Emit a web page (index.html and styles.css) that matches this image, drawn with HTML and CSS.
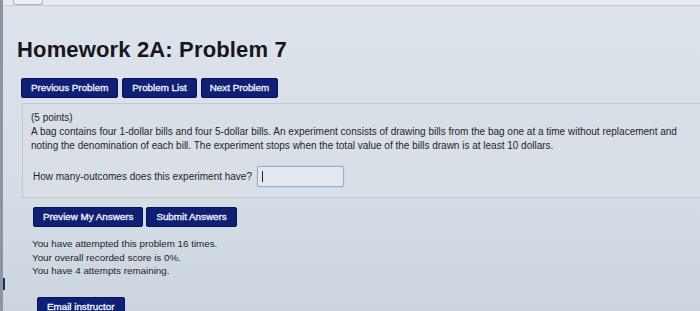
FILE: index.html
```html
<!DOCTYPE html>
<html>
<head>
<meta charset="utf-8">
<link rel="stylesheet" href="styles.css">
</head>
<body>
<div class="screen">
  <div class="topbar"><div class="tab"></div></div>
  <div class="page">
    <h1 class="title">Homework 2A: Problem 7</h1>
    <div class="nav">
      <button class="btn">Previous Problem</button>
      <button class="btn">Problem List</button>
      <button class="btn">Next Problem</button>
    </div>
    <div class="problem">
      <div class="points">(5 points)</div>
      <p class="statement">A bag contains four 1-dollar bills and four 5-dollar bills. An experiment consists of drawing bills from the bag one at a time without replacement and noting the denomination of each bill. The experiment stops when the total value of the bills drawn is at least 10 dollars.</p>
      <div class="question">
        <span>How many-outcomes does this experiment have?</span>
        <span class="answer"><span class="caret"></span></span>
      </div>
    </div>
    <div class="actions">
      <button class="btn">Preview My Answers</button>
      <button class="btn">Submit Answers</button>
    </div>
    <div class="status">
      <div>You have attempted this problem 16 times.</div>
      <div>Your overall recorded score is 0%.</div>
      <div>You have 4 attempts remaining.</div>
    </div>
    <div class="email">
      <button class="btn">Email instructor</button>
    </div>
  </div>
  <div class="edge-mark"></div>
</div>
</body>
</html>
```
FILE: styles.css
```css
html, body {
  margin: 0;
  padding: 0;
}
body {
  width: 700px;
  height: 311px;
  overflow: hidden;
  font-family: "Liberation Sans", Arial, sans-serif;
  color: #1c1f26;
}
.screen {
  position: relative;
  width: 700px;
  height: 311px;
  background: linear-gradient(180deg, #dde3ea 0%, #d7dee6 55%, #ccd5df 100%);
  border-left: 3px solid #8e959e;
  box-sizing: border-box;
  overflow: hidden;
}
.topbar {
  height: 5px;
  background: #e6ebf0;
  border-bottom: 1px solid #c3cad2;
  padding-left: 10px;
}
.tab {
  width: 28px;
  height: 4px;
  background: #eef1f4;
  border: 1px solid #aab1b9;
  border-top: none;
  border-radius: 0 0 3px 3px;
}
.page {
  padding-left: 14px;
}
.title {
  margin: 30px 0 0 0;
  font-size: 22px;
  line-height: 28px;
  font-weight: bold;
  color: #15171c;
  letter-spacing: 0.15px;
}
.btn {
  font-family: "Liberation Sans", Arial, sans-serif;
  font-size: 9.8px;
  font-weight: normal;
  -webkit-text-stroke: 0.35px #eef0f8;
  color: #eef0f8;
  background: #0e1f74;
  border: 1px solid #06125a;
  border-radius: 2px;
  height: 20px;
  padding: 0 9px;
  line-height: 18px;
}
.nav {
  display: flex;
  gap: 4px;
  margin-top: 14px;
  margin-left: 4px;
}
.nav .btn:last-child {
  padding: 0 8px;
}
.problem {
  margin-top: 5px;
  margin-left: 5px;
  width: 680px;
  box-sizing: border-box;
  background: #d9dfe6;
  border: 1px solid #c3cad2;
  border-right: none;
  padding: 7px 18px 10px 8px;
  font-size: 10px;
  line-height: 14px;
}
.statement {
  margin: 0;
}
.question {
  display: flex;
  align-items: center;
  gap: 5px;
  margin-top: 13px;
  padding-left: 2px;
}
.answer {
  display: inline-block;
  width: 85px;
  height: 19px;
  background: #e4e9ef;
  border: 1px solid #8fb0d8;
  border-radius: 2px;
  box-shadow: 0 0 2px #9dbde3;
  position: relative;
}
.caret {
  position: absolute;
  left: 4px;
  top: 4px;
  width: 1px;
  height: 11px;
  background: #222;
}
.actions {
  display: flex;
  gap: 3px;
  margin-top: 9px;
  margin-left: 16px;
}
.status {
  margin-top: 10px;
  margin-left: 15px;
  font-size: 9.8px;
  line-height: 13.5px;
}
.email {
  margin-top: 18px;
  margin-left: 20px;
}
.edge-mark {
  position: absolute;
  left: -3px;
  top: 278px;
  width: 5px;
  height: 12px;
  background: #1a2a6a;
}
```
